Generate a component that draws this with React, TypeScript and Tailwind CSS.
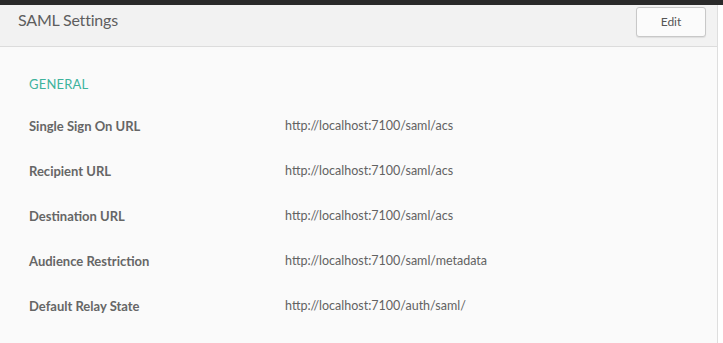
import React from 'react';

const rows = [
  { label: 'Single Sign On URL', value: 'http://localhost:7100/saml/acs' },
  { label: 'Recipient URL', value: 'http://localhost:7100/saml/acs' },
  { label: 'Destination URL', value: 'http://localhost:7100/saml/acs' },
  { label: 'Audience Restriction', value: 'http://localhost:7100/saml/metadata' },
  { label: 'Default Relay State', value: 'http://localhost:7100/auth/saml/' },
];

export default function App() {
  return (
    <div className="h-[343px] w-[723px] overflow-hidden bg-white font-['Lato',sans-serif]">
      <div className="h-[5px] bg-[#2a2a2a]" />
      <div className="w-[718px] h-[338px] border-r border-[#dedede] bg-[#fafafa]">
        {/* Header */}
        <div className="h-[42px] bg-[#f2f2f2] border-b border-[#dcdcdc] flex items-start justify-between pl-[18px] pr-[11px]">
          <h1 className="text-[16px] tracking-[-0.2px] text-[#5e5e5e] leading-none mt-[7px]">SAML Settings</h1>
          <button className="mt-[2px] w-[70px] h-[30px] rounded-[3px] border border-[#c8c8c8] bg-[#fbfbfb] text-[12px] text-[#555] shadow-[0_1px_1px_rgba(0,0,0,0.08)]">
            Edit
          </button>
        </div>

        {/* Body */}
        <div className="pl-[29px] pt-[31px]">
          <div className="text-[13px] text-[#3eb39c] leading-none tracking-[0.2px]">GENERAL</div>
          <div className="mt-[28px] flex flex-col gap-[30px]">
            {rows.map(r => (
              <div key={r.label} className="flex items-center h-[15px] leading-none">
                <div className="w-[256px] text-[13px] font-bold text-[#666666]">{r.label}</div>
                <div className="text-[12.5px] text-[#626262]">{r.value}</div>
              </div>
            ))}
          </div>
        </div>
      </div>
    </div>
  );
}
